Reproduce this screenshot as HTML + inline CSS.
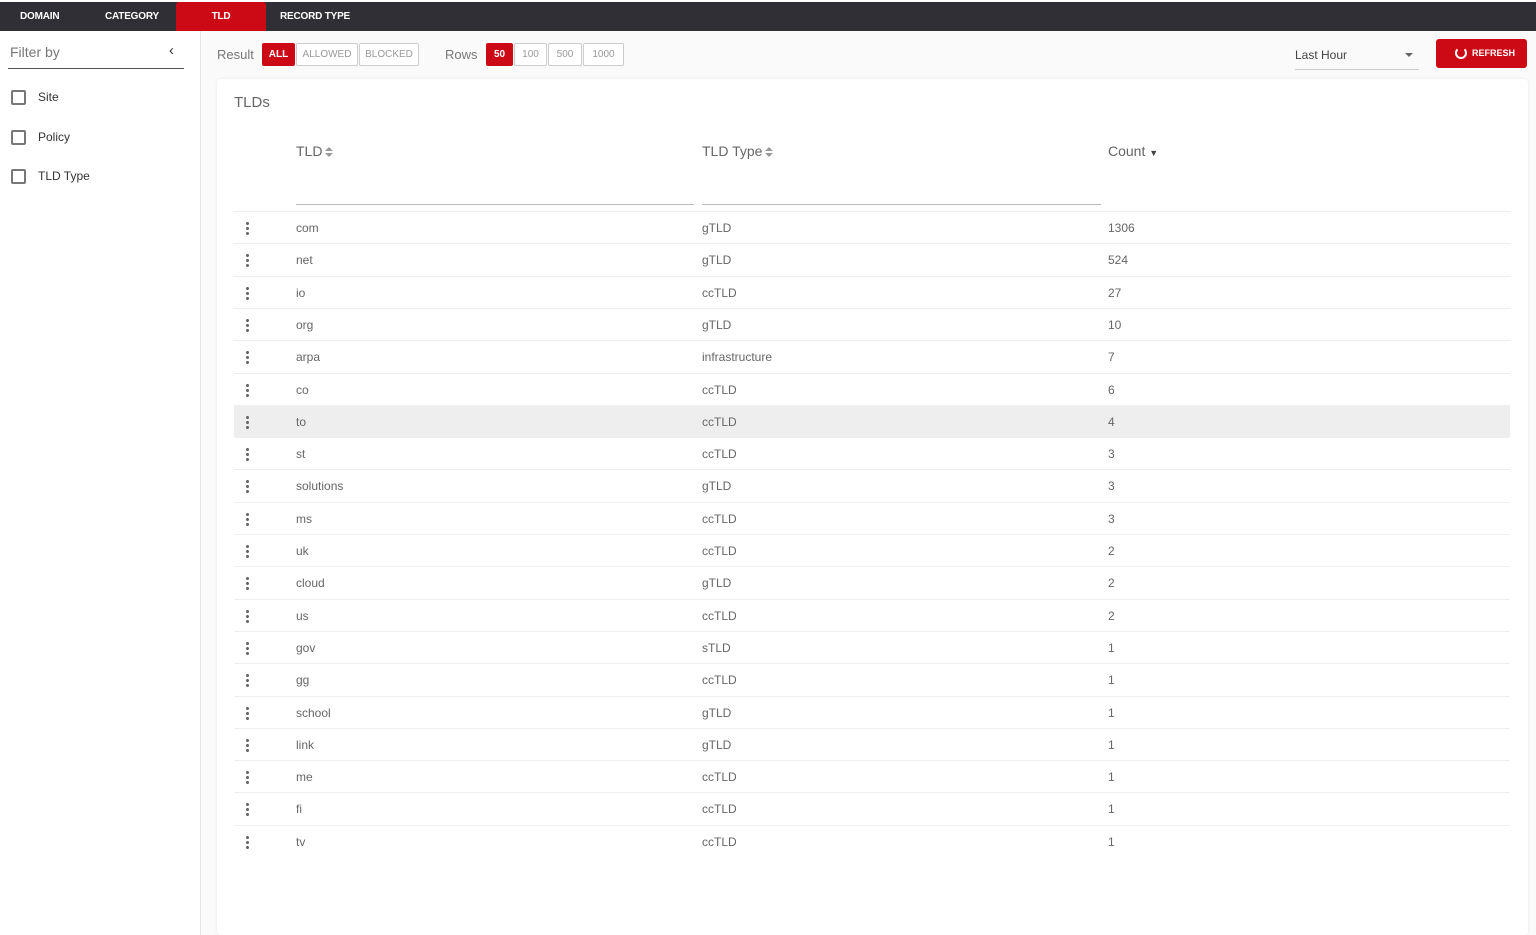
<!DOCTYPE html>
<html style="width:1536px;height:935px;overflow:hidden"><head><style>
*{box-sizing:border-box;margin:0;padding:0}
body{width:1536px;height:935px;background:#fafafa;font-family:"Liberation Sans",sans-serif;position:relative;overflow:hidden;color:#555}
.top{position:absolute;left:0;top:2px;width:1536px;height:29px;background:#2f2f35}
.tab{position:absolute;top:0;height:29px;line-height:29px;color:#fff;font-size:10px;font-weight:bold;letter-spacing:-0.2px}
.side{position:absolute;left:0;top:31px;width:201px;height:904px;background:#fff;border-right:1px solid #e6e6e6}
.cb{position:absolute;left:11px;width:15px;height:15px;border:2px solid #777;border-radius:2px}
.lbl{position:absolute;left:38px;font-size:12px;color:#333}
.btn{position:absolute;top:43px;height:23px;border:1px solid #ccc;font-size:10px;color:#999;text-align:center;line-height:21px;background:#fff;border-radius:2px}
.red{background:#cc0a15;color:#fff;border-color:#cc0a15;font-weight:bold}
.card{position:absolute;left:217px;top:79px;width:1311px;height:856px;background:#fff;border-radius:4px;box-shadow:0 0 3px rgba(0,0,0,.08)}
.row{position:absolute;left:234px;width:1276px;height:32.3px;border-top:1px solid #eee;font-size:12px;color:#666}
.row span{position:absolute;top:9px}
.dots{position:absolute;left:12px;top:9px;width:3px;height:14px;background:radial-gradient(circle,#666 1.4px,transparent 1.6px) 0 0/3px 5px repeat-y}
.srt{display:inline-block;vertical-align:middle;width:8px;height:10px;position:relative;margin-left:3px}
.srt:before{content:"";position:absolute;left:0;top:0;border:4px solid transparent;border-bottom:4px solid #999;border-top:0}
.srt:after{content:"";position:absolute;left:0;top:6px;border:4px solid transparent;border-top:4px solid #999;border-bottom:0}
</style></head><body>
<div style="position:absolute;top:0;left:0;width:1536px;height:2px;background:#fff"></div>
<div class="top">
<div class="tab" style="left:20px">DOMAIN</div>
<div class="tab" style="left:105px">CATEGORY</div>
<div class="tab" style="left:176px;width:90px;background:#cc0a15;text-align:center;border-radius:3px 3px 0 0">TLD</div>
<div class="tab" style="left:280px">RECORD TYPE</div>
</div>
<div class="side">
<div style="position:absolute;left:10px;top:13px;font-size:14px;color:#777">Filter by</div>
<div style="position:absolute;left:169px;top:11px;font-size:15px;color:#333">&#8249;</div>
<div style="position:absolute;left:8px;top:37px;width:176px;height:1px;background:#555"></div>
<div class="cb" style="top:59px"></div><div class="lbl" style="top:59px">Site</div>
<div class="cb" style="top:99px"></div><div class="lbl" style="top:99px">Policy</div>
<div class="cb" style="top:138px"></div><div class="lbl" style="top:138px">TLD Type</div>
</div>
<div style="position:absolute;left:217px;top:47px;font-size:13px;color:#777">Result</div>
<div class="btn red" style="left:262px;width:33px">ALL</div>
<div class="btn" style="left:296px;width:62px">ALLOWED</div>
<div class="btn" style="left:359px;width:60px">BLOCKED</div>
<div style="position:absolute;left:445px;top:47px;font-size:13px;color:#777">Rows</div>
<div class="btn red" style="left:486px;width:27px">50</div>
<div class="btn" style="left:514px;width:33px">100</div>
<div class="btn" style="left:548px;width:34px">500</div>
<div class="btn" style="left:583px;width:41px">1000</div>
<div style="position:absolute;left:1295px;top:48px;font-size:12px;color:#444">Last Hour</div>
<div style="position:absolute;left:1405px;top:53px;border:4px solid transparent;border-top:4px solid #666"></div>
<div style="position:absolute;left:1295px;top:69px;width:124px;height:1px;background:#ccc"></div>
<div style="position:absolute;left:1436px;top:39px;width:91px;height:29px;background:#cc0a15;border-radius:3px;color:#fff;font-size:9px;font-weight:bold;line-height:29px;padding-left:36px">REFRESH</div>
<div style="position:absolute;left:1455px;top:47px;width:12px;height:12px;border:2px solid #fff;border-top-color:transparent;border-radius:50%"></div>
<div class="card"></div>
<div style="position:absolute;left:234px;top:94px;font-size:15px;color:#666">TLDs</div>
<div style="position:absolute;left:296px;top:143px;font-size:14px;color:#666">TLD<i class="srt"></i></div>
<div style="position:absolute;left:702px;top:143px;font-size:14px;color:#666">TLD Type<i class="srt"></i></div>
<div style="position:absolute;left:1108px;top:143px;font-size:14px;color:#666">Count <span style="font-size:9px;color:#444">&#9660;</span></div>
<div style="position:absolute;left:296px;top:204px;width:398px;height:1px;background:#bbb"></div>
<div style="position:absolute;left:702px;top:204px;width:399px;height:1px;background:#bbb"></div>
<div class="row" style="top:211px"><i class="dots"></i><span style="left:62px">com</span><span style="left:468px">gTLD</span><span style="left:874px">1306</span></div>
<div class="row" style="top:243.3px"><i class="dots"></i><span style="left:62px">net</span><span style="left:468px">gTLD</span><span style="left:874px">524</span></div>
<div class="row" style="top:275.6px"><i class="dots"></i><span style="left:62px">io</span><span style="left:468px">ccTLD</span><span style="left:874px">27</span></div>
<div class="row" style="top:307.9px"><i class="dots"></i><span style="left:62px">org</span><span style="left:468px">gTLD</span><span style="left:874px">10</span></div>
<div class="row" style="top:340.2px"><i class="dots"></i><span style="left:62px">arpa</span><span style="left:468px">infrastructure</span><span style="left:874px">7</span></div>
<div class="row" style="top:372.5px"><i class="dots"></i><span style="left:62px">co</span><span style="left:468px">ccTLD</span><span style="left:874px">6</span></div>
<div class="row" style="top:404.8px;background:#eee"><i class="dots"></i><span style="left:62px">to</span><span style="left:468px">ccTLD</span><span style="left:874px">4</span></div>
<div class="row" style="top:437.1px"><i class="dots"></i><span style="left:62px">st</span><span style="left:468px">ccTLD</span><span style="left:874px">3</span></div>
<div class="row" style="top:469.4px"><i class="dots"></i><span style="left:62px">solutions</span><span style="left:468px">gTLD</span><span style="left:874px">3</span></div>
<div class="row" style="top:501.7px"><i class="dots"></i><span style="left:62px">ms</span><span style="left:468px">ccTLD</span><span style="left:874px">3</span></div>
<div class="row" style="top:534px"><i class="dots"></i><span style="left:62px">uk</span><span style="left:468px">ccTLD</span><span style="left:874px">2</span></div>
<div class="row" style="top:566.3px"><i class="dots"></i><span style="left:62px">cloud</span><span style="left:468px">gTLD</span><span style="left:874px">2</span></div>
<div class="row" style="top:598.6px"><i class="dots"></i><span style="left:62px">us</span><span style="left:468px">ccTLD</span><span style="left:874px">2</span></div>
<div class="row" style="top:630.9px"><i class="dots"></i><span style="left:62px">gov</span><span style="left:468px">sTLD</span><span style="left:874px">1</span></div>
<div class="row" style="top:663.2px"><i class="dots"></i><span style="left:62px">gg</span><span style="left:468px">ccTLD</span><span style="left:874px">1</span></div>
<div class="row" style="top:695.5px"><i class="dots"></i><span style="left:62px">school</span><span style="left:468px">gTLD</span><span style="left:874px">1</span></div>
<div class="row" style="top:727.8px"><i class="dots"></i><span style="left:62px">link</span><span style="left:468px">gTLD</span><span style="left:874px">1</span></div>
<div class="row" style="top:760.1px"><i class="dots"></i><span style="left:62px">me</span><span style="left:468px">ccTLD</span><span style="left:874px">1</span></div>
<div class="row" style="top:792.4px"><i class="dots"></i><span style="left:62px">fi</span><span style="left:468px">ccTLD</span><span style="left:874px">1</span></div>
<div class="row" style="top:824.7px"><i class="dots"></i><span style="left:62px">tv</span><span style="left:468px">ccTLD</span><span style="left:874px">1</span></div>
</body></html>
